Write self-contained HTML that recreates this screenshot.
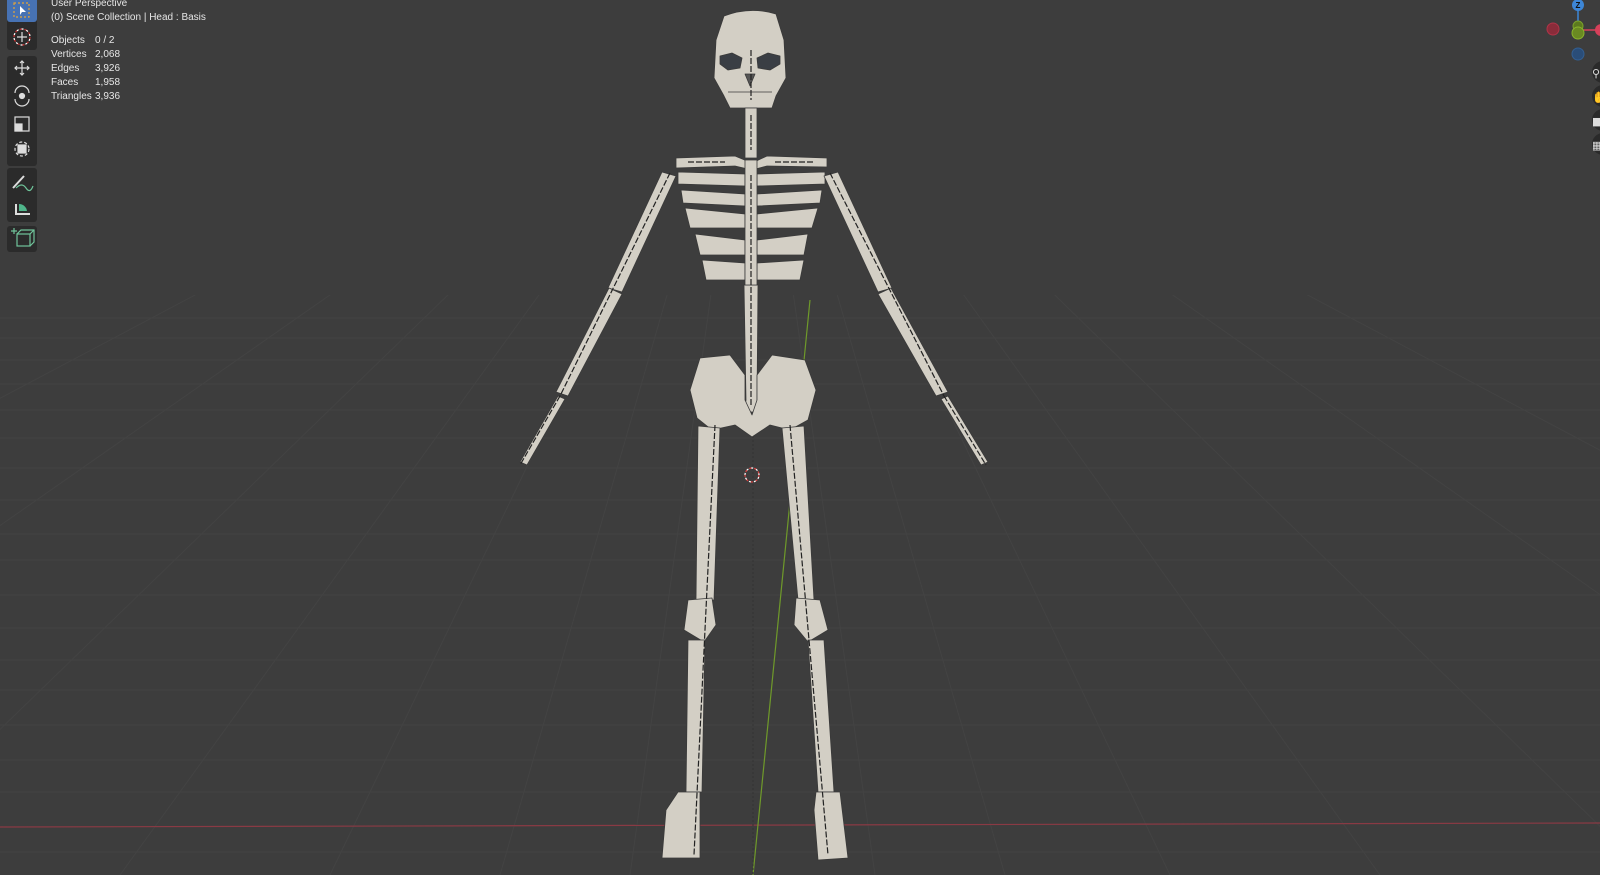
<!DOCTYPE html>
<html><head><meta charset="utf-8"><style>
body{margin:0;width:1600px;height:875px;background:#3d3d3d;overflow:hidden;position:relative;font-family:"Liberation Sans",sans-serif}
.t{position:absolute;color:#e6e6e6;font-size:10px;line-height:14px}
.tb{position:absolute;left:7px;width:30px;background:#2b2b2b;border-radius:3px}
</style></head><body>
<svg width="1600" height="875" style="position:absolute;left:0;top:0">
<defs><clipPath id="fl"><rect x="0" y="295" width="1600" height="600"/></clipPath></defs>
<g stroke="#434343" stroke-width="1" fill="none" clip-path="url(#fl)">
<line x1="0" y1="318" x2="1600" y2="318"/><line x1="0" y1="338" x2="1600" y2="338"/><line x1="0" y1="360" x2="1600" y2="360"/><line x1="0" y1="384" x2="1600" y2="384"/><line x1="0" y1="410" x2="1600" y2="410"/><line x1="0" y1="438" x2="1600" y2="438"/><line x1="0" y1="468" x2="1600" y2="468"/><line x1="0" y1="500" x2="1600" y2="500"/><line x1="0" y1="534" x2="1600" y2="534"/><line x1="0" y1="560" x2="1600" y2="560"/><line x1="0" y1="595" x2="1600" y2="595"/><line x1="0" y1="628" x2="1600" y2="628"/><line x1="0" y1="660" x2="1600" y2="660"/><line x1="0" y1="690" x2="1600" y2="690"/><line x1="0" y1="725" x2="1600" y2="725"/><line x1="0" y1="760" x2="1600" y2="760"/><line x1="0" y1="792" x2="1600" y2="792"/><line x1="0" y1="852" x2="1600" y2="852"/>
<line x1="752" y1="0" x2="-900" y2="875"/><line x1="752" y1="0" x2="-500" y2="875"/><line x1="752" y1="0" x2="-150" y2="875"/><line x1="752" y1="0" x2="120" y2="875"/><line x1="752" y1="0" x2="330" y2="875"/><line x1="752" y1="0" x2="500" y2="875"/><line x1="752" y1="0" x2="630" y2="875"/><line x1="752" y1="0" x2="875" y2="875"/><line x1="752" y1="0" x2="1005" y2="875"/><line x1="752" y1="0" x2="1170" y2="875"/><line x1="752" y1="0" x2="1380" y2="875"/><line x1="752" y1="0" x2="1650" y2="875"/><line x1="752" y1="0" x2="2000" y2="875"/><line x1="752" y1="0" x2="2400" y2="875"/>
</g>
<line x1="0" y1="827" x2="1600" y2="823" stroke="#8a3a44" stroke-width="1.2"/>
<line x1="753" y1="875" x2="810" y2="300" stroke="#6f9a2a" stroke-width="1.2"/>
<line x1="753" y1="420" x2="753" y2="875" stroke="#333" stroke-width="1" stroke-dasharray="2 2"/>
<g fill="#d3cfc5" stroke="#3a3a3a" stroke-width="0.8" stroke-linejoin="round">
<path d="M724 16 Q750 6 776 14 L784 40 L786 78 L776 96 L772 108 L730 108 L724 96 L714 78 L716 40 Z"/>
<path d="M720 56 L732 53 L742 58 L740 68 L728 70 L720 64 Z" fill="#3a3e44"/>
<path d="M757 58 L768 53 L780 56 L780 64 L770 70 L758 68 Z" fill="#3a3e44"/>
<path d="M745 74 L750 86 L755 74 Z" fill="#555"/>
<line x1="728" y1="92" x2="772" y2="92"/>
<rect x="745" y="108" width="12" height="50"/>
<path d="M744 285 L758 285 L757 400 L760 412 L744 412 L746 400 Z"/>
<path d="M676 158 L735 156 L752 163 L767 156 L827 158 L827 167 L767 166 L752 170 L735 166 L676 168 Z"/>
<path d="M678 172 L745 174 L745 186 L678 184 Z"/><path d="M757 174 L825 172 L825 184 L757 186 Z"/>
<path d="M681 190 L745 194 L745 206 L683 203 Z"/><path d="M757 194 L822 190 L820 203 L757 206 Z"/>
<path d="M685 208 L745 214 L745 228 L690 228 Z"/><path d="M757 214 L818 208 L812 228 L757 228 Z"/>
<path d="M695 234 L745 240 L745 255 L700 255 Z"/><path d="M757 240 L808 234 L804 255 L757 255 Z"/>
<path d="M702 260 L745 263 L745 280 L706 280 Z"/><path d="M757 263 L804 260 L800 280 L757 280 Z"/>
<rect x="745" y="160" width="12" height="125"/>
<path d="M700 358 L730 355 L745 375 L745 400 L752 415 L757 400 L757 375 L772 355 L805 360 L816 390 L808 420 L790 430 L770 425 L752 437 L735 425 L712 430 L697 418 L690 390 Z"/>
<path d="M662 172 L676 176 L622 292 L608 288 Z"/>
<path d="M838 172 L824 176 L878 292 L892 288 Z"/>
<path d="M609 288 L622 294 L568 396 L556 392 Z"/>
<path d="M891 288 L878 294 L936 396 L948 392 Z"/>
<path d="M558 396 L565 399 L527 465 L520 462 Z"/>
<path d="M948 396 L941 399 L981 465 L988 462 Z"/>
<path d="M698 426 L720 428 L714 600 L696 600 Z"/>
<path d="M782 428 L804 426 L814 600 L798 600 Z"/>
<path d="M688 600 L712 598 L716 625 L704 642 L684 630 Z"/>
<path d="M796 598 L820 600 L828 630 L808 642 L794 625 Z"/>
<path d="M688 640 L705 640 L702 792 L686 792 Z"/>
<path d="M808 640 L824 640 L834 792 L818 792 Z"/>
<path d="M678 792 L700 792 L700 858 L662 858 L666 810 Z"/>
<path d="M816 792 L840 792 L848 858 L818 860 L814 810 Z"/>
</g>
<g stroke="#222" stroke-width="1.2" stroke-dasharray="6 2">
<line x1="751" y1="50" x2="751" y2="100"/><line x1="751" y1="115" x2="751" y2="150"/><line x1="751" y1="175" x2="751" y2="405"/>
<line x1="670" y1="173" x2="560" y2="396"/><line x1="830" y1="173" x2="944" y2="396"/>
<line x1="560" y1="396" x2="520" y2="465"/><line x1="944" y1="396" x2="986" y2="465"/>
<line x1="715" y1="425" x2="694" y2="855"/><line x1="790" y1="425" x2="828" y2="855"/>
<line x1="688" y1="162" x2="725" y2="162"/><line x1="775" y1="162" x2="815" y2="162"/>
</g>
<circle cx="752" cy="475" r="7" fill="none" stroke="#e04040" stroke-width="1.2" stroke-dasharray="3 2"/>
<circle cx="752" cy="475" r="7" fill="none" stroke="#fff" stroke-width="1.2" stroke-dasharray="2 3" stroke-dashoffset="3"/>
<line x1="1578" y1="6" x2="1578" y2="33" stroke="#3d86d6" stroke-width="1.5"/>
<line x1="1578" y1="30" x2="1600" y2="30" stroke="#d6405a" stroke-width="1.5"/>
<circle cx="1553" cy="29" r="6" fill="#8a2c3a" stroke="#b03448"/>
<circle cx="1578" cy="54" r="6" fill="#2a4d78" stroke="#335f92"/>
<circle cx="1578" cy="26" r="5" fill="#5c7a1e" stroke="#7aa22a"/>
<circle cx="1578" cy="33" r="6" fill="#6a8a22" stroke="#8ab42c"/>
<circle cx="1578" cy="5" r="6" fill="#3d86d6"/>
<text x="1578" y="8" font-size="8" font-weight="bold" text-anchor="middle" fill="#111" font-family="Liberation Sans">Z</text>
<circle cx="1601" cy="30" r="6" fill="#d6405a"/>
<g fill="#2a2a2a"><circle cx="1603" cy="72" r="11"/><circle cx="1603" cy="96" r="11"/><circle cx="1603" cy="120" r="11"/><circle cx="1603" cy="144" r="11"/></g>
<g fill="#ddd" font-size="11" font-family="DejaVu Sans"><text x="1592" y="77">⚲</text><text x="1592" y="101">✋</text><text x="1592" y="125">■</text><text x="1592" y="149">▦</text></g>
</svg>
<div class="tb" style="top:0;height:50px"></div>
<div class="tb" style="top:56px;height:110px"></div>
<div class="tb" style="top:168px;height:54px"></div>
<div class="tb" style="top:226px;height:26px"></div>
<div style="position:absolute;left:7px;top:0;width:30px;height:22px;background:#4772b3;border-radius:0 0 3px 3px"></div>
<svg width="40" height="260" style="position:absolute;left:0;top:0">
<g fill="none" stroke="#ddd" stroke-width="1.2">
<rect x="14" y="3" width="15" height="14" stroke="#e3a43a" stroke-dasharray="2 2"/>
<path d="M20 6 L20 15 L22 12 L26 12 Z" fill="#fff" stroke="none"/>
<circle cx="22" cy="37" r="8" stroke="#c33" stroke-dasharray="3 2"/>
<circle cx="22" cy="37" r="8" stroke="#fff" stroke-dasharray="2 3" stroke-dashoffset="3"/>
<path d="M22 32V42M17 37H27"/>
<path d="M22 61V75M15 68H29M20 63L22 61 24 63M20 73L22 75 24 73M17 66L15 68 17 70M27 66L29 68 27 70"/>
<path d="M15 93 A7 7 0 0 1 29 93M29 99 A7 7 0 0 1 15 99"/><circle cx="22" cy="96" r="2.5" fill="#ddd"/>
<rect x="15" y="117" width="14" height="14"/><rect x="15" y="124" width="7" height="7" fill="#ddd"/>
<circle cx="22" cy="149" r="7" stroke-dasharray="3 2"/><rect x="18" y="145" width="8" height="8" fill="#ddd"/>
<path d="M13 188 L24 176" stroke-width="2"/><path d="M16 188 Q22 182 26 188 T33 186" stroke="#6fc49a"/>
<path d="M16 204V214H30" stroke-width="2"/><path d="M19 211 L19 204 A8 8 0 0 1 27 211 Z" fill="#4fb58a" stroke="none"/>
<rect x="17" y="234" width="13" height="12" stroke="#6fc49a"/><path d="M17 234 L21 230 H34 V242 L30 246M30 234 L34 230" stroke="#6fc49a"/><path d="M14 228V234M11 231H17" stroke="#6fc49a"/>
</g></svg>
<div class="t" style="left:51px;top:-3px">User Perspective</div>
<div class="t" style="left:51px;top:11px">(0) Scene Collection | Head : Basis</div>
<div class="t" style="left:51px;top:34px">Objects<br>Vertices<br>Edges<br>Faces<br>Triangles</div>
<div class="t" style="left:95px;top:34px">0 / 2<br>2,068<br>3,926<br>1,958<br>3,936</div>
</body></html>
